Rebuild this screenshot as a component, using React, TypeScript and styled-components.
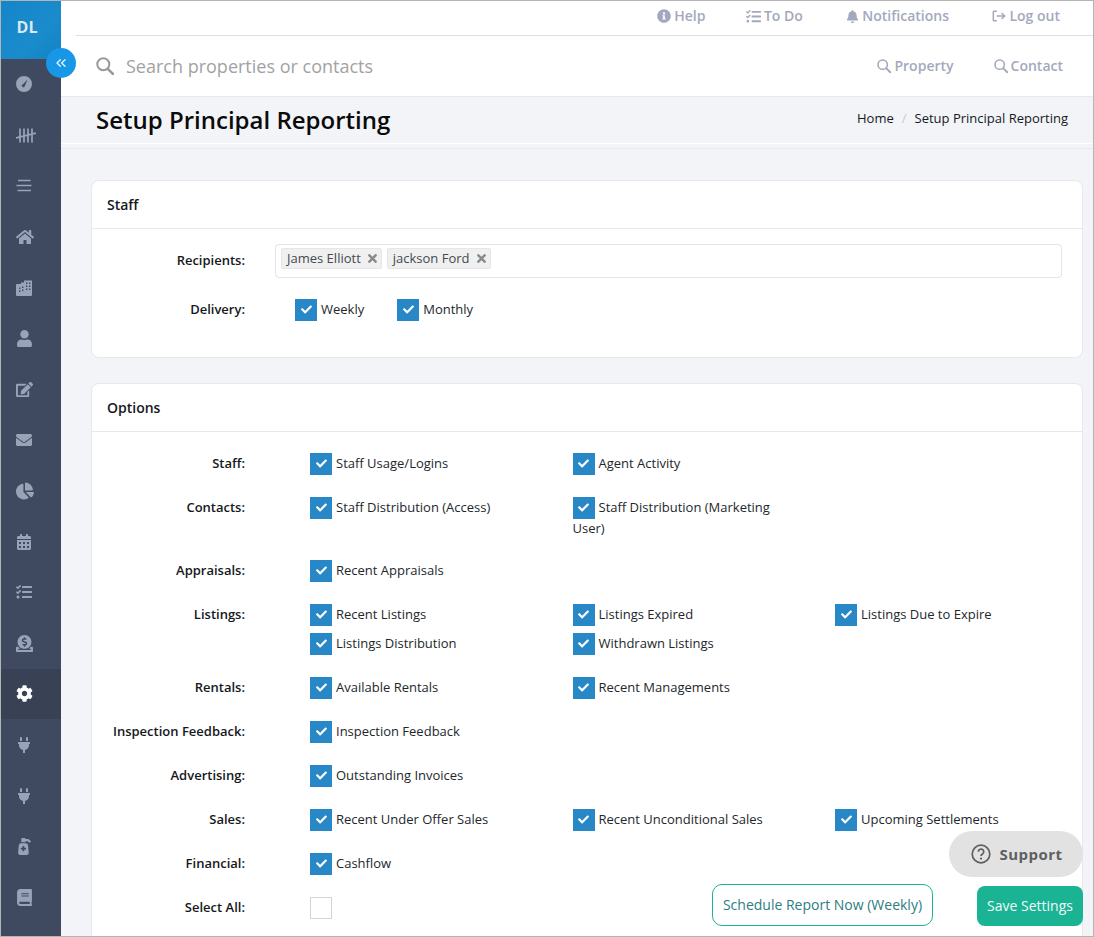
import React from "react";
import styled, { createGlobalStyle } from "styled-components";
import {
  FaHome, FaUser, FaEdit, FaEnvelope, FaChartPie, FaCalendarAlt, FaTasks, FaDonate, FaCog, FaPlug,
  FaPumpMedical, FaBook, FaInfoCircle, FaBell, FaCheck, FaTimes,
} from "react-icons/fa";
import { ChevronsLeft } from "lucide-react";

const Global = createGlobalStyle`
  html, body { margin: 0; padding: 0; height: 937px; overflow: hidden; background: #f3f4f8; }
  body { font-family: "Open Sans", "Noto Sans", sans-serif; font-size: 13px; color: #212529; }
  * { box-sizing: border-box; }
`;

const Frame = styled.div`
  display: flex; position: relative; width: 1094px; height: 937px; overflow: hidden;
  border: 1px solid #b4b4b4; background: #f3f4f8;
`;
const Sidebar = styled.nav`
  width: 60px; flex: none; background: #3f4a60; display: flex; flex-direction: column;
`;
const Logo = styled.div`
  height: 58px; flex: none; background: linear-gradient(135deg, #1485c8 0%, #1a8ccc 60%, #1284c6 100%);
  color: #dfe8ef; font-size: 16px; font-weight: 700; display: flex; justify-content: center;
  padding-top: 15px; line-height: 22px; padding-right: 8px;
`;
const NavItem = styled.div<{ $active?: boolean }>`
  height: 50.8px; flex: none; display: flex; align-items: center; padding-left: 15px;
  background: ${(p) => (p.$active ? "#384254" : "transparent")};
  color: ${(p) => (p.$active ? "#ffffff" : "#98a3b8")};
  svg { display: block; }
`;
const Collapse = styled.button`
  position: absolute; left: 45px; top: 47px; width: 30px; height: 30px; border-radius: 50%;
  border: 0; padding: 0; background: #1897e6; color: #e4f3fd; display: flex; align-items: center;
  justify-content: center; z-index: 2;
`;
const Main = styled.main`
  flex: 1; min-width: 0; display: flex; flex-direction: column;
`;
const TopBar = styled.div`
  height: 35px; flex: none; background: #fff; padding-left: 15px;
`;
const TopInner = styled.div`
  height: 35px; border-bottom: 1px solid #dfdfe2; display: flex; justify-content: flex-end;
  align-items: center; padding: 0 33px 4px 0; gap: 43.5px;
`;
const MutedLink = styled.span`
  display: inline-flex; align-items: center; gap: 3px; color: #a3a9bd; font-size: 14px; font-weight: 600;
  line-height: 20px;
`;
const HelpLink = styled(MutedLink)`
  margin-right: -3px;
`;
const SearchIcon = styled.span`
  display: inline-flex; color: #999;
`;
const SearchBar = styled.div`
  height: 61px; flex: none; background: #fff; border-bottom: 1px solid #e7e8ec; display: flex;
  align-items: center; padding: 0 30px 0 35px;
`;
const SearchText = styled.span`
  flex: 1; margin-left: 12px; color: #a2a2a2; font-size: 18px; line-height: 24px;
`;
const SearchLinks = styled.div`
  display: flex; gap: 40px; align-items: center;
`;
const TitleBar = styled.div`
  height: 47px; flex: none; background: #f3f4f8; display: flex; align-items: center;
  justify-content: space-between; padding: 0 25px 0 35px; border-bottom: 1px solid #fff;
`;
const Title = styled.h1`
  margin: 0; font-size: 24px; font-weight: 600; line-height: 32px; color: #0b0b0b;
`;
const Crumbs = styled.div`
  display: flex; gap: 8px; font-size: 13px; color: #15191e; line-height: 18px; margin-top: -5px;
`;
const CrumbSep = styled.span`
  color: #c8cad0;
`;
const Content = styled.div`
  flex: 1; min-height: 0; border-top: 1px solid #e7e8ec; margin-top: 4px; padding: 31px 10px 0 30px;
  display: flex; flex-direction: column; gap: 25px; overflow: hidden;
`;
const Card = styled.section`
  background: #fff; border: 1px solid #e7e8ec; border-radius: 8px; flex: none;
`;
const CardHead = styled.header`
  height: 48px; border-bottom: 1px solid #e7e8ec; padding: 0 15px; display: flex; align-items: center;
  font-size: 14px; font-weight: 600; color: #16181c;
`;
const StaffBody = styled.div`
  padding: 15px 20px 29px 0; display: flex; flex-direction: column; gap: 21.5px;
`;
const StaffRow = styled.div`
  display: grid; grid-template-columns: 153px 1fr; column-gap: 30px; align-items: start;
`;
const FieldLabel = styled.div<{ $top?: number }>`
  text-align: right; font-size: 13px; font-weight: 600; color: #16181c; line-height: 18px;
  padding-top: ${(p) => p.$top ?? 0}px;
`;
const TagInput = styled.div`
  height: 34px; border: 1px solid #e3e4e8; border-radius: 4px; padding: 3px 5px; display: flex; gap: 5px;
`;
const Tag = styled.span`
  display: inline-flex; align-items: center; gap: 5px; height: 21px; background: #f0f0f0;
  border: 1px solid #e6e6e6; border-radius: 2px; padding: 0 2px 1px 5px; color: #444a50; font-size: 13px;
  svg { color: #8a8a8a; margin-top: 1px; }
`;
const DeliveryOptions = styled.div`
  display: flex; gap: 33px; padding-left: 20px; margin-top: -1px;
`;
const OptionsBody = styled.div`
  padding: 22px 0 60px; display: flex; flex-direction: column; gap: 15px;
`;
const OptionRow = styled.div`
  display: grid; grid-template-columns: 153px 1fr; column-gap: 65px;
`;
const OptionGrid = styled.div`
  display: grid; grid-template-columns: repeat(3, 262.5px); margin-top: -1px; margin-bottom: 1px;
`;
const Option = styled.label`
  display: block; min-height: 29px; max-width: 215px; line-height: 19px; padding-bottom: 7px;
  font-size: 13px; color: #23272c;
`;
const Box = styled.span<{ $on?: boolean }>`
  display: inline-flex; width: 22px; height: 22px; align-items: center; justify-content: center;
  vertical-align: -2px; margin-right: 4px; color: #fff;
  background: ${(p) => (p.$on ? "#2787c7" : "#fff")};
  border: 1px solid ${(p) => (p.$on ? "#2787c7" : "#d4d4d4")};
`;
const FloatArea = styled.div`
  position: absolute; z-index: 3;
`;
const Support = styled(FloatArea)`
  left: 948px; top: 830px; width: 134px; height: 46px; border-radius: 23px; background: #e2e2e2;
  display: flex; align-items: center; justify-content: center; gap: 8px; color: #5f5f5f; font-weight: 700;
  font-size: 15px; letter-spacing: 0.5px; padding-left: 2px;
`;
const OutlineBtn = styled(FloatArea)`
  left: 711px; top: 883px; width: 221px; height: 42px; border: 1px solid #1ab394; border-radius: 10px;
  background: #fff; color: #2c7d84; font-size: 14px; display: flex; align-items: center; justify-content: center;
  padding-bottom: 2px;
`;
const SaveBtn = styled(FloatArea)`
  left: 976px; top: 885px; width: 106px; height: 40px; border-radius: 8px; background: #1ab394;
  color: #f0fbf8; font-size: 14px; display: flex; align-items: center; justify-content: center;
  padding-bottom: 2px;
`;

const Gauge = () => (
  <svg width="16" height="16" viewBox="0 0 16 16"><path fill="currentColor" fillRule="evenodd" d="M8 0a8 8 0 1 1 0 16A8 8 0 0 1 8 0Zm3.6 3.6L7 8.2a1.5 1.5 0 0 0 -1 2.2a1.5 1.5 0 0 0 2.5 .3Z" /></svg>
);
const Tally = () => (
  <svg width="20" height="15" viewBox="0 0 20 15"><path stroke="currentColor" strokeWidth="1.7" fill="none" d="M4 0.5v14M8 0.5v14M12 0.5v14M16 0.5v14M0 10L20 5" /></svg>
);
const Stagger = () => (
  <svg width="16" height="13" viewBox="0 0 16 13"><path stroke="currentColor" strokeWidth="1.7" fill="none" d="M2 1.5h12.5M0.5 6.5h15M1.5 11.5h13.5" /></svg>
);
const City = () => (
  <svg width="16" height="16" viewBox="0 0 16 16"><path fill="currentColor" fillRule="evenodd" d="M8 0.5h8V15a1 1 0 0 1-1 1H1a1 1 0 0 1-1-1V5a1 1 0 0 1 1-1h4V2.5h3ZM10 2.5v1.6h1.4V2.5Zm3 0v1.6h1.4V2.5ZM10 5.5v1.6h1.4V5.5Zm3 0v1.6h1.4V5.5ZM10 8.5v1.6h1.4V8.5Zm3 0v1.6h1.4V8.5ZM6 6.5v1.6h1.4V6.5ZM6 9.5v1.6h1.4V9.5ZM3 7.5v1.6h1.4V7.5ZM3 10.5v1.6h1.4v-1.6Z" /></svg>
);
const Logout = () => (
  <svg width="14" height="14" viewBox="0 0 16 14"><path fill="none" stroke="currentColor" strokeWidth="1.7" d="M5.5 1.5H2.5a1 1 0 0 0-1 1v9a1 1 0 0 0 1 1h3M5.5 7h9M11 3.5L14.5 7L11 10.5" /></svg>
);
const Mag = ({ s, w = 2 }: { s: number; w?: number }) => (
  <svg width={s} height={s} viewBox="0 0 18 18"><circle cx="7.3" cy="7.3" r="6" fill="none" stroke="currentColor" strokeWidth={w} /><path d="M11.8 11.8L17 17" stroke="currentColor" strokeWidth={w + 0.5} strokeLinecap="round" /></svg>
);
const Question = () => (
  <svg width="20" height="20" viewBox="0 0 20 20"><circle cx="10" cy="10" r="8.8" fill="none" stroke="currentColor" strokeWidth="1.7" /><path d="M7.3 7.8a2.7 2.7 0 1 1 4.2 2.2c-1 .6-1.5 1-1.5 2" fill="none" stroke="currentColor" strokeWidth="1.7" /><circle cx="10" cy="14.6" r="1.1" fill="currentColor" /></svg>
);

const nav: { icon: React.ReactNode; active?: boolean }[] = [
  { icon: <Gauge /> }, { icon: <Tally /> }, { icon: <Stagger /> }, { icon: <FaHome size={18} /> },
  { icon: <City /> }, { icon: <FaUser size={17} /> }, { icon: <FaEdit size={17} /> }, { icon: <FaEnvelope size={16} /> },
  { icon: <FaChartPie size={18} /> }, { icon: <FaCalendarAlt size={16} /> }, { icon: <FaTasks size={16} /> },
  { icon: <FaDonate size={17} /> }, { icon: <FaCog size={17} />, active: true }, { icon: <FaPlug size={16} /> },
  { icon: <FaPlug size={16} /> }, { icon: <FaPumpMedical size={17} /> }, { icon: <FaBook size={17} /> },
];

const Check = ({ label, on = true }: { label?: string; on?: boolean }) => (
  <Option>
    <Box $on={on}>{on && <FaCheck size={11} />}</Box>
    {label}
  </Option>
);

const rows: [string, string[]][] = [
  ["Staff:", ["Staff Usage/Logins", "Agent Activity"]],
  ["Contacts:", ["Staff Distribution (Access)", "Staff Distribution (Marketing User)"]],
  ["Appraisals:", ["Recent Appraisals"]],
  ["Listings:", ["Recent Listings", "Listings Expired", "Listings Due to Expire", "Listings Distribution", "Withdrawn Listings"]],
  ["Rentals:", ["Available Rentals", "Recent Managements"]],
  ["Inspection Feedback:", ["Inspection Feedback"]],
  ["Advertising:", ["Outstanding Invoices"]],
  ["Sales:", ["Recent Under Offer Sales", "Recent Unconditional Sales", "Upcoming Settlements"]],
  ["Financial:", ["Cashflow"]],
];

export default function App() {
  return (
    <Frame>
      <Global />
      <Sidebar>
        <Logo>DL</Logo>
        {nav.map((n, i) => (
          <NavItem key={i} $active={n.active}>{n.icon}</NavItem>
        ))}
      </Sidebar>
      <Collapse aria-label="Collapse"><ChevronsLeft size={16} strokeWidth={2} /></Collapse>
      <Main>
        <TopBar>
          <TopInner>
            <HelpLink><FaInfoCircle size={14} />Help</HelpLink>
            <MutedLink><FaTasks size={15} />To Do</MutedLink>
            <MutedLink><FaBell size={13} />Notifications</MutedLink>
            <MutedLink><Logout />Log out</MutedLink>
          </TopInner>
        </TopBar>
        <SearchBar>
          <SearchIcon><Mag s={18} /></SearchIcon>
          <SearchText>Search properties or contacts</SearchText>
          <SearchLinks>
            <MutedLink><Mag s={14} w={2} />Property</MutedLink>
            <MutedLink><Mag s={14} w={2} />Contact</MutedLink>
          </SearchLinks>
        </SearchBar>
        <TitleBar>
          <Title>Setup Principal Reporting</Title>
          <Crumbs><span>Home</span><CrumbSep>/</CrumbSep><span>Setup Principal Reporting</span></Crumbs>
        </TitleBar>
        <Content>
          <Card>
            <CardHead>Staff</CardHead>
            <StaffBody>
              <StaffRow>
                <FieldLabel $top={7}>Recipients:</FieldLabel>
                <TagInput>
                  <Tag>James Elliott <FaTimes size={13} /></Tag>
                  <Tag>jackson Ford <FaTimes size={13} /></Tag>
                </TagInput>
              </StaffRow>
              <StaffRow>
                <FieldLabel $top={0}>Delivery:</FieldLabel>
                <DeliveryOptions>
                  <Check label="Weekly" />
                  <Check label="Monthly" />
                </DeliveryOptions>
              </StaffRow>
            </StaffBody>
          </Card>
          <Card>
            <CardHead>Options</CardHead>
            <OptionsBody>
              {rows.map(([label, opts]) => (
                <OptionRow key={label}>
                  <FieldLabel>{label}</FieldLabel>
                  <OptionGrid>
                    {opts.map((o) => <Check key={o} label={o} />)}
                  </OptionGrid>
                </OptionRow>
              ))}
              <OptionRow>
                <FieldLabel>Select All:</FieldLabel>
                <OptionGrid><Check on={false} /></OptionGrid>
              </OptionRow>
            </OptionsBody>
          </Card>
        </Content>
      </Main>
      <Support><Question />Support</Support>
      <OutlineBtn>Schedule Report Now (Weekly)</OutlineBtn>
      <SaveBtn>Save Settings</SaveBtn>
    </Frame>
  );
}
